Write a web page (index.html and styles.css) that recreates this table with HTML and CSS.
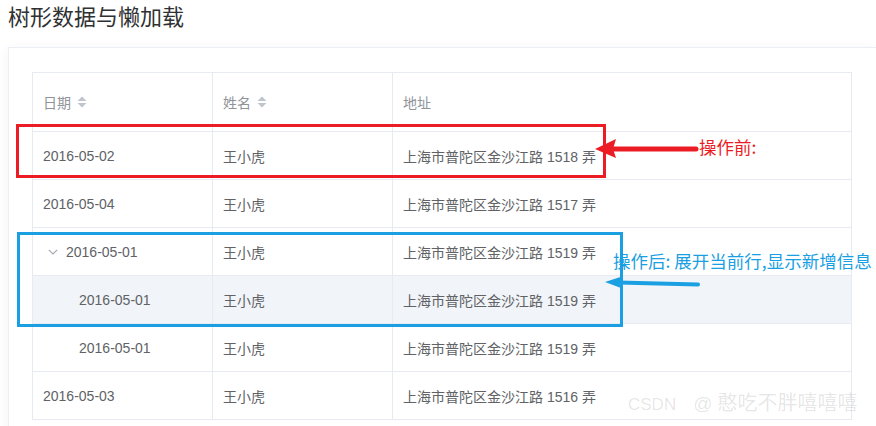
FILE: index.html
```html
<!DOCTYPE html>
<html lang="zh">
<head>
<meta charset="utf-8">
<link rel="stylesheet" href="styles.css">
</head>
<body>
<div class="page">
  <h1 class="title">树形数据与懒加载</h1>
  <div class="card">
    <div class="table">
      <div class="row head">
        <div class="cell"><span>日期</span><svg class="caret" width="10" height="12" viewBox="0 0 10 12"><polygon points="0.5,5 5,0.5 9.5,5"/><polygon points="0.5,7 5,11.5 9.5,7"/></svg></div>
        <div class="cell"><span>姓名</span><svg class="caret" width="10" height="12" viewBox="0 0 10 12"><polygon points="0.5,5 5,0.5 9.5,5"/><polygon points="0.5,7 5,11.5 9.5,7"/></svg></div>
        <div class="cell"><span>地址</span></div>
      </div>
      <div class="row">
        <div class="cell">2016-05-02</div>
        <div class="cell">王小虎</div>
        <div class="cell">上海市普陀区金沙江路 1518 弄</div>
      </div>
      <div class="row">
        <div class="cell">2016-05-04</div>
        <div class="cell">王小虎</div>
        <div class="cell">上海市普陀区金沙江路 1517 弄</div>
      </div>
      <div class="row">
        <div class="cell"><span class="expand"><svg width="10" height="6" viewBox="0 0 10 6"><path d="M0.8 0.8 L5 5 L9.2 0.8"/></svg></span>2016-05-01</div>
        <div class="cell">王小虎</div>
        <div class="cell">上海市普陀区金沙江路 1519 弄</div>
      </div>
      <div class="row hover">
        <div class="cell"><span class="indent"></span>2016-05-01</div>
        <div class="cell">王小虎</div>
        <div class="cell">上海市普陀区金沙江路 1519 弄</div>
      </div>
      <div class="row">
        <div class="cell"><span class="indent"></span>2016-05-01</div>
        <div class="cell">王小虎</div>
        <div class="cell">上海市普陀区金沙江路 1519 弄</div>
      </div>
      <div class="row">
        <div class="cell">2016-05-03</div>
        <div class="cell">王小虎</div>
        <div class="cell">上海市普陀区金沙江路 1516 弄</div>
      </div>
    </div>
  </div>

  <svg class="annot" width="876" height="426" viewBox="0 0 876 426">
    <rect x="17.5" y="125.5" width="587" height="51" fill="none" stroke="#ec1c24" stroke-width="3"/>
    <line x1="612" y1="149" x2="696" y2="149" stroke="#ec1c24" stroke-width="5" stroke-linecap="round"/>
    <polygon points="595,149 616,139 613,149 616,158" fill="#ec1c24"/>
    <rect x="18.5" y="233.5" width="603" height="92" fill="none" stroke="#1aa0e2" stroke-width="3"/>
    <line x1="618" y1="282.5" x2="698" y2="284.5" stroke="#1aa0e2" stroke-width="4" stroke-linecap="round"/>
    <polygon points="605,282 622,276.5 619,282.5 621,288" fill="#1aa0e2"/>
  </svg>
  <span class="note before">操作前:</span>
  <span class="note after">操作后: 展开当前行,显示新增信息</span>
  <span class="watermark"><span class="wm-latin">CSDN</span><span class="wm-at">@</span>憨吃不胖嘻嘻嘻</span>
</div>
</body>
</html>
```

FILE: styles.css
```css
html, body {
  margin: 0;
  padding: 0;
  background: #ffffff;
}
body {
  font-family: "Liberation Sans", "Noto Sans CJK SC", sans-serif;
  width: 876px;
  height: 426px;
  overflow: hidden;
}
.page {
  position: relative;
  width: 876px;
  height: 426px;
}
.title {
  margin: 0;
  padding-left: 8px;
  font-size: 22px;
  line-height: 30px;
  font-weight: normal;
  color: #303133;
  font-family: "Noto Sans CJK SC", sans-serif;
}
.card {
  margin: 17px 0 0 8px;
  border: 1px solid #ebeef5;
  border-right: none;
  padding: 24px 24px 24px 23px;
  box-shadow: 0 2px 12px rgba(0, 0, 0, 0.05);
  background: #fff;
}
.table {
  width: 820px;
  box-sizing: border-box;
  border-top: 1px solid #e8eaf2;
  border-left: 1px solid #e8eaf2;
}
.row {
  display: grid;
  grid-template-columns: 180px 180px 1fr;
  height: 48px;
}
.row.head {
  height: 59px;
}
.row.hover {
  background: #f1f4f8;
}
.cell {
  box-sizing: border-box;
  border-right: 1px solid #e8eaf2;
  border-bottom: 1px solid #e8eaf2;
  padding-left: 10px;
  display: flex;
  align-items: center;
  font-size: 14px;
  color: #606266;
  white-space: nowrap;
}
.head .cell {
  color: #909399;
}
.caret {
  margin-left: 6px;
  fill: #c0c4cc;
}
.expand {
  width: 20px;
  margin-right: 3px;
  display: inline-flex;
  justify-content: center;
  align-items: center;
}
.expand svg {
  fill: none;
  stroke: #a3a6ad;
  stroke-width: 1.1;
}
.indent {
  display: inline-block;
  width: 36px;
}
.annot {
  position: absolute;
  left: 0;
  top: 0;
  pointer-events: none;
}
.note {
  position: absolute;
  font-family: "Noto Sans CJK SC", sans-serif;
  font-size: 17.5px;
  line-height: 26px;
  white-space: nowrap;
}
.note.before {
  left: 699px;
  top: 134px;
  color: #ec1c24;
}
.note.after {
  left: 613px;
  top: 248px;
  color: #1aa0e2;
}
.watermark {
  position: absolute;
  left: 628px;
  top: 388px;
  font-family: "Noto Sans CJK SC", sans-serif;
  font-size: 20px;
  line-height: 28px;
  color: rgba(0, 0, 0, 0.11);
  white-space: nowrap;
}
.wm-latin {
  font-family: "Liberation Sans", sans-serif;
  font-size: 17px;
}
.wm-at {
  font-family: "Liberation Sans", sans-serif;
  font-size: 19px;
  margin-left: 17px;
  margin-right: 5px;
}
```
